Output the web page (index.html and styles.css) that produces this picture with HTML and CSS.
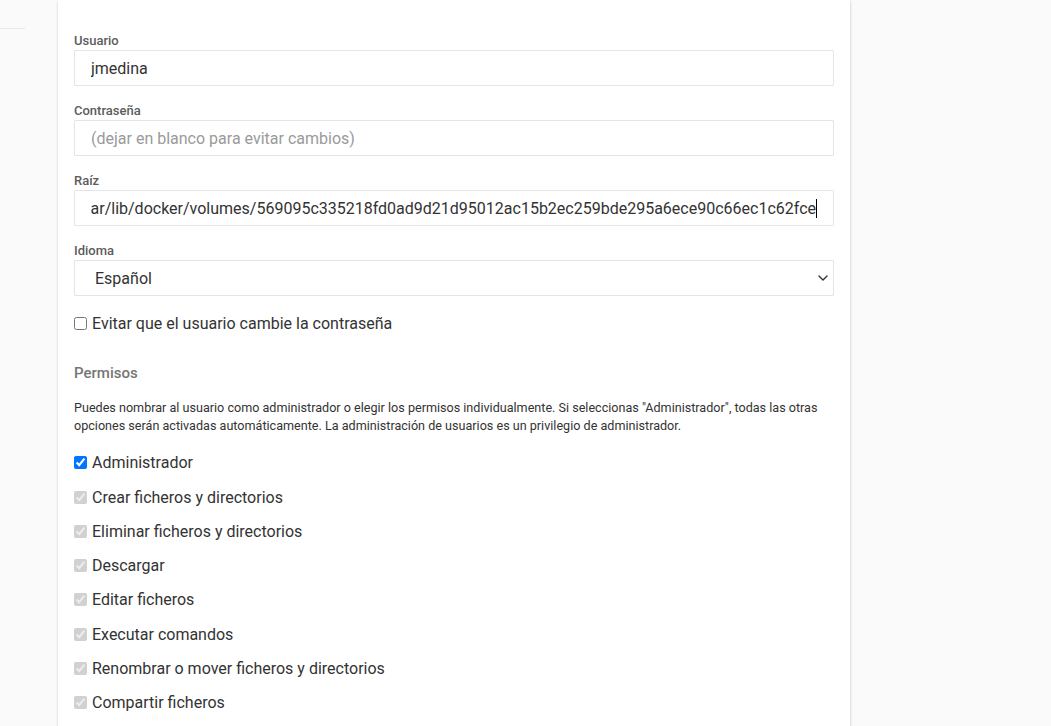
FILE: index.html
```html
<!DOCTYPE html>
<html lang="es">
<head>
<meta charset="utf-8">
<title>Usuario</title>
<link rel="stylesheet" href="styles.css">
</head>
<body>
<div class="page">
  <aside class="side"><div class="side-rule"></div></aside>
  <main class="card">
    <div class="field">
      <label class="label" for="u">Usuario</label>
      <input id="u" class="input" type="text" value="jmedina">
    </div>
    <div class="field">
      <label class="label" for="p">Contraseña</label>
      <input id="p" class="input" type="password" placeholder="(dejar en blanco para evitar cambios)">
    </div>
    <div class="field">
      <label class="label">Raíz</label>
      <div class="input input-scroll"><div class="scroll-clip"><span class="scroll-text">/var/lib/docker/volumes/569095c335218fd0ad9d21d95012ac15b2ec259bde295a6ece90c66ec1c62fce</span><span class="caret"></span></div></div>
    </div>
    <div class="field">
      <label class="label" for="l">Idioma</label>
      <div class="select-wrap">
        <select id="l" class="input select"><option>Español</option></select>
        <svg class="chevron" width="10" height="6" viewBox="0 0 10 6" aria-hidden="true"><path d="M1 1 L5 5 L9 1" fill="none" stroke="#333" stroke-width="1.4" stroke-linecap="round" stroke-linejoin="round"/></svg>
      </div>
    </div>
    <p class="check check--lead"><input class="box" type="checkbox">Evitar que el usuario cambie la contraseña</p>
    <h3 class="section-title">Permisos</h3>
    <p class="small">Puedes nombrar al usuario como administrador o elegir los permisos individualmente. Si seleccionas "Administrador", todas las otras opciones serán activadas automáticamente. La administración de usuarios es un privilegio de administrador.</p>
    <p class="check"><input class="box" type="checkbox" checked>Administrador</p>
    <p class="check"><input class="box" type="checkbox" checked disabled>Crear ficheros y directorios</p>
    <p class="check"><input class="box" type="checkbox" checked disabled>Eliminar ficheros y directorios</p>
    <p class="check"><input class="box" type="checkbox" checked disabled>Descargar</p>
    <p class="check"><input class="box" type="checkbox" checked disabled>Editar ficheros</p>
    <p class="check"><input class="box" type="checkbox" checked disabled>Executar comandos</p>
    <p class="check"><input class="box" type="checkbox" checked disabled>Renombrar o mover ficheros y directorios</p>
    <p class="check"><input class="box" type="checkbox" checked disabled>Compartir ficheros</p>
  </main>
</div>
</body>
</html>
```

FILE: styles.css
```css
html, body {
  margin: 0;
  background: #fafafa;
  font-family: Roboto, "Liberation Sans", Arial, sans-serif;
  color: #333;
  overflow: hidden;
}

.page {
  display: flex;
  align-items: flex-start;
  height: 726px;
}

.side {
  width: 58px;
  flex: none;
}

.side-rule {
  width: 25px;
  height: 28px;
  border-bottom: 1px solid #e9e9e9;
}

.card {
  width: 792px;
  flex: none;
  box-sizing: border-box;
  background: #fff;
  box-shadow: 0 1px 3px rgba(0, 0, 0, 0.06), 0 1px 2px rgba(0, 0, 0, 0.12), 1px 0 3px rgba(0, 0, 0, 0.05);
  padding: 33px 16px 40px;
  min-height: 900px;
}

.field {
  margin-bottom: 17px;
}

.label {
  display: block;
  font-size: 13px;
  line-height: 15px;
  font-weight: 500;
  color: #5c5c5c;
  margin-bottom: 2px;
}

.input {
  display: block;
  width: 100%;
  height: 36px;
  box-sizing: border-box;
  padding: 8px 16px;
  border: 1px solid rgba(0, 0, 0, 0.1);
  border-radius: 1.6px;
  background: #fff;
  font-family: Roboto, "Liberation Sans", Arial, sans-serif;
  font-size: 16px;
  color: #333;
  outline: none;
}

.input::placeholder {
  color: #9a9a9a;
}

.input-scroll {
  padding-top: 0;
  padding-bottom: 0;
}

.scroll-clip {
  display: flex;
  justify-content: flex-end;
  align-items: center;
  height: 34px;
  overflow: hidden;
  white-space: nowrap;
}

.scroll-text {
  flex: none;
  line-height: 19px;
}

.caret {
  flex: none;
  width: 0;
  height: 19px;
  border-left: 1px solid #000;
}

.select-wrap {
  position: relative;
}

.select {
  -webkit-appearance: none;
  appearance: none;
  padding: 0 30px 0 20px;
}

.chevron {
  position: absolute;
  right: 6px;
  top: 15px;
  pointer-events: none;
}

.check {
  margin: 16px 0;
  font-size: 16px;
  line-height: 18.3px;
  color: #333;
}

.check--lead {
  margin-top: 19px;
}

.box {
  margin: 0 5px 0 0;
  width: 13px;
  height: 13px;
  vertical-align: -1px;
}

.section-title {
  margin: 31px 0 0;
  font-size: 15px;
  line-height: 18px;
  font-weight: 500;
  color: #757575;
}

.small {
  margin: 17px 0 19px;
  font-size: 12.6px;
  line-height: 18px;
  color: #333;
}
```
